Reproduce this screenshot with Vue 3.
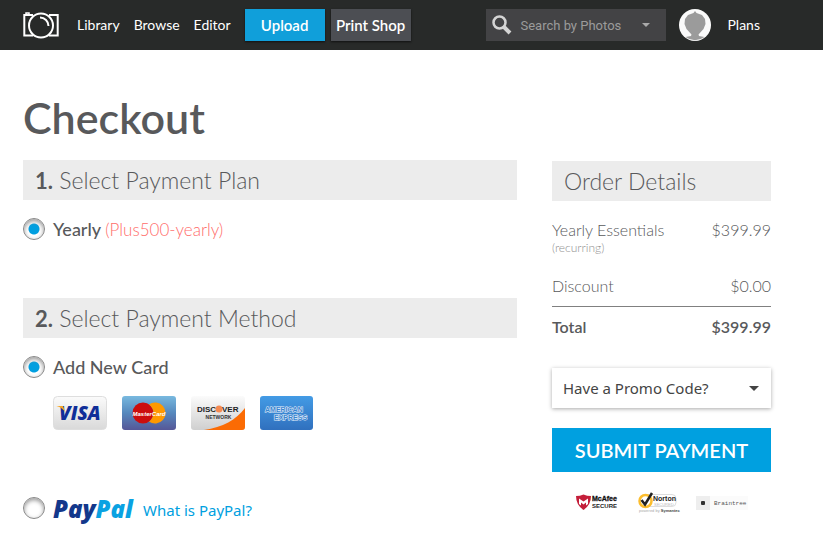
<script setup>
import { ref } from 'vue'

const query = ref('')
const plan = ref('yearly')
const method = ref('card')
const promoOpen = ref(false)
const links = ['Library', 'Browse', 'Editor']
</script>

<template>
  <header class="topbar">
    <a class="brand" href="#" aria-label="Home">
      <svg width="36" height="27" viewBox="0 0 36 27" fill="none" stroke="#fff">
        <path d="M10 3H1.3v20.500H10M26 3h8.700v20.500H26" stroke-width="2" />
        <path d="M3 2.500V1h3v1.500" stroke-width="1.500" />
        <circle cx="18" cy="13.500" r="12" stroke-width="2" />
        <path d="M17 5.500a8.500 8.500 0 0 1 8.500 8.500" stroke-width="2" />
      </svg>
    </a>
    <nav class="nav">
      <a v-for="link in links" :key="link" href="#">{{ link }}</a>
    </nav>
    <div class="actions">
      <button type="button" class="upload">Upload</button>
      <button type="button" class="shop">Print Shop</button>
    </div>
    <form class="search" role="search" @submit.prevent>
      <svg width="20" height="20" viewBox="0 0 20 20" fill="none" stroke="#d4d4d4">
        <circle cx="7.500" cy="7.500" r="6" stroke-width="2.500" />
        <path d="M12 12l6 6" stroke-width="4" />
      </svg>
      <input v-model="query" type="text" aria-label="Search" placeholder="Search by Photos" />
      <button type="button" aria-label="Search type">
        <svg width="8" height="4" viewBox="0 0 8 4"><path d="M0 0h8L4 4z" fill="#aaa" /></svg>
      </button>
    </form>
    <a class="avatar" href="#" aria-label="Account">
      <svg width="32" height="32" viewBox="0 0 32 32">
        <circle cx="16" cy="16" r="16" fill="#fafafa" />
        <path d="M16 2l1.500 2L23 6l3 4 .5 5-2 5-5 5.500.5 1.500 5.500 1A16 16 0 0 1 6.500 28l5.500-1 .5-1.500-5-5.500-2-5L6 10l3-4 5.500-2z" fill="#9b9b9b" />
      </svg>
    </a>
    <a class="plans" href="#">Plans</a>
  </header>

  <main class="page">
    <h1>Checkout</h1>
    <div class="columns">
      <div>
        <section class="plan">
          <h2><b>1.</b> Select Payment Plan</h2>
          <label class="choice">
            <input v-model="plan" type="radio" name="plan" value="yearly" />
            <span>Yearly <span class="code">(Plus500-yearly)</span></span>
          </label>
        </section>

        <section>
          <h2><b>2.</b> Select Payment Method</h2>
          <label class="choice">
            <input v-model="method" type="radio" name="method" value="card" />
            <span>Add New Card</span>
          </label>
          <div class="cards">
            <svg width="54" height="34" viewBox="0 0 54 34" role="img" aria-label="Visa">
              <defs>
                <linearGradient id="silver" x2="0" y2="1"><stop stop-color="#fbfbfb" /><stop offset="1" stop-color="#d9d9d9" /></linearGradient>
              </defs>
              <rect x=".5" y=".5" width="53" height="33" rx="4" fill="url(#silver)" stroke="#dedede" />
              <text x="6" y="24" class="visa">VISA</text>
              <path d="M3.500 10h6.500l2.500 6.500q-3-5-9-6.500z" fill="#f5a623" />
            </svg>
            <svg width="54" height="34" viewBox="0 0 54 34" role="img" aria-label="MasterCard">
              <defs>
                <linearGradient id="dusk" x2="0" y2="1"><stop stop-color="#78b9df" /><stop offset=".5" stop-color="#5688bd" /><stop offset="1" stop-color="#565797" /></linearGradient>
              </defs>
              <rect width="54" height="34" rx="3" fill="url(#dusk)" />
              <circle cx="21" cy="17" r="10.500" fill="#cc0d0d" />
              <path d="M27 8.400a10.500 10.500 0 1 1 0 17.200a10.500 10.500 0 0 0 0-17.200z" fill="#ff9900" />
              <text x="27" y="19.500" text-anchor="middle" class="master">MasterCard</text>
            </svg>
            <svg width="54" height="34" viewBox="0 0 54 34" role="img" aria-label="Discover">
              <defs>
                <linearGradient id="pewter" x2="0" y2="1"><stop stop-color="#fbfbfb" /><stop offset="1" stop-color="#cfcfcf" /></linearGradient>
              </defs>
              <rect width="54" height="34" rx="3" fill="url(#pewter)" />
              <path d="M13 34C32 31 45 24 54 12v19q0 3-3 3z" fill="#fb6b04" />
              <text x="6" y="16" class="discover">DISC</text>
              <circle cx="28" cy="13" r="3.500" fill="#f58a52" />
              <text x="31" y="16" class="discover">VER</text>
              <text x="27.500" y="23" text-anchor="middle" class="network">NETWORK</text>
            </svg>
            <svg width="53" height="34" viewBox="0 0 53 34" role="img" aria-label="American Express">
              <defs>
                <linearGradient id="sky" x2="0" y2="1"><stop stop-color="#439be5" /><stop offset="1" stop-color="#3070be" /></linearGradient>
              </defs>
              <rect width="53" height="34" rx="3" fill="url(#sky)" />
              <text x="5" y="16" class="amex">AMERICAN</text>
              <text x="14" y="24" class="amex">EXPRESS</text>
            </svg>
          </div>
          <div class="paypal">
            <label class="choice">
              <input v-model="method" type="radio" name="method" value="paypal" />
              <svg width="81" height="30" viewBox="0 0 81 30" role="img" aria-label="PayPal">
                <text x="0" y="21" class="pp"><tspan fill="#13388b">Pay</tspan><tspan fill="#0aa2e2">Pal</tspan></text>
              </svg>
            </label>
            <a href="#">What is PayPal?</a>
          </div>
        </section>
      </div>

      <aside>
        <h2>Order Details</h2>
        <table>
          <tbody>
            <tr class="item">
              <th scope="row">Yearly Essentials<small>(recurring)</small></th>
              <td>$399.99</td>
            </tr>
            <tr class="discount">
              <th scope="row">Discount</th>
              <td>$0.00</td>
            </tr>
            <tr class="total">
              <th scope="row">Total</th>
              <td>$399.99</td>
            </tr>
          </tbody>
        </table>
        <button type="button" class="promo" :aria-expanded="promoOpen" @click="promoOpen = !promoOpen">
          <span>Have a Promo Code?</span>
          <svg width="10" height="5" viewBox="0 0 10 5"><path d="M0 0h10L5 5z" fill="#444" /></svg>
        </button>
        <button type="button" class="submit">SUBMIT PAYMENT</button>
        <div class="seals">
          <svg width="46" height="22" viewBox="0 0 46 22" role="img" aria-label="McAfee Secure">
            <path d="M0 4q4 0 7.500-1.500Q11 4 15 4q0 9-7.500 14Q0 13 0 4z" fill="#c41e3a" />
            <path d="M3 12V6.500l4.500 3 4.500-3V12l-2 1.500v-3l-2.500 2-2.500-2v3z" fill="#fff" />
            <text x="16" y="9" class="mc">McAfee</text>
            <text x="16" y="16" class="sec">SECURE</text>
          </svg>
          <svg width="42" height="22" viewBox="0 0 42 22" role="img" aria-label="Norton Secured">
            <rect x="7" y="2.500" width="31" height="12" rx="4" fill="#fff" stroke="#ddd" />
            <circle cx="7.500" cy="9" r="6" fill="#fff" stroke="#fcbd2d" stroke-width="2.500" />
            <path d="M3.500 8l3.500 4.500L14 1" fill="none" stroke="#222" stroke-width="2.500" />
            <text x="15" y="9" class="norton">Norton</text>
            <text x="16" y="14" class="tiny faint">SECURED</text>
            <text x="1" y="20" class="tiny"><tspan fill="#aaa">powered by</tspan> <tspan font-weight="700">Symantec</tspan></text>
          </svg>
          <svg width="52" height="22" viewBox="0 0 52 22" role="img" aria-label="Braintree">
            <rect y="4" width="52" height="14" fill="#fbfbfb" />
            <rect y="4" width="14" height="14" fill="#eee" />
            <rect x="5" y="9" width="4" height="4" rx="1" fill="#333" />
            <text x="18" y="13" class="brain">Braintree</text>
          </svg>
        </div>
      </aside>
    </div>
  </main>
</template>

<style>
body {
  margin: 0;
  background: #fff;
}
</style>

<style scoped>
.topbar,
.page {
  font-family: Lato, "Open Sans", sans-serif;
  color: #58595b;
}
button,
input {
  font-family: inherit;
  margin: 0;
  padding: 0;
  border: 0;
}
button {
  cursor: pointer;
}
a {
  color: #00a0e0;
  text-decoration: none;
}
svg {
  display: block;
  flex: none;
  overflow: visible;
}

.topbar {
  display: flex;
  align-items: center;
  height: 50px;
  padding: 0 23px;
  box-sizing: border-box;
  background: #282a29;
}
.nav {
  display: flex;
  gap: 14px;
  margin-left: 18px;
}
.nav a,
.plans {
  font-size: 14px;
  line-height: 20px;
  color: #fff;
}
.actions {
  display: flex;
  gap: 6px;
  margin-left: 14px;
}
.actions button {
  width: 80px;
  height: 32px;
  color: #fff;
  font-size: 15px;
  font-weight: 600;
  box-shadow: 0 1px 2px #111;
}
.actions .upload {
  background: #109fda;
}
.actions .shop {
  background: #4c4e53;
}
.search {
  display: flex;
  align-items: center;
  width: 180px;
  height: 32px;
  margin-left: auto;
  padding: 0 16px 0 6px;
  gap: 8px;
  box-sizing: border-box;
  background: #434345;
}
.search input {
  flex: 1;
  min-width: 0;
  height: 30px;
  background: none;
  color: #ddd;
  font: 13px Roboto, sans-serif;
}
.search input::placeholder {
  color: #9b9b9b;
  opacity: 1;
}
.search button {
  background: none;
}
.avatar {
  margin-left: 13px;
}
.plans {
  margin: 0 40px 0 16px;
}

.page {
  padding: 44px 52px 24px 23px;
}
h1 {
  margin: 0 0 18px;
  font-size: 43px;
  line-height: 48px;
  font-weight: 600;
}
.columns {
  display: grid;
  grid-template-columns: minmax(0, 1fr) 219px;
  gap: 35px;
}
h2 {
  margin: 0;
  padding: 0 12px;
  background: #ececec;
  font-size: 23px;
  line-height: 40px;
  height: 40px;
  font-weight: 300;
}
h2 b {
  font-size: 22px;
  font-weight: 700;
}
.choice {
  display: flex;
  align-items: center;
  gap: 8px;
  font-size: 18px;
  line-height: 22px;
  font-weight: 500;
}
h2 + .choice {
  margin-top: 18px;
}
.choice input {
  appearance: none;
  flex: none;
  width: 22px;
  height: 22px;
  border: 1px solid #888;
  border-radius: 50%;
  background: #fff;
  box-shadow: inset 0 2px 4px #999;
}
.choice input:checked {
  background: radial-gradient(circle, #009fe0 5px, #fff 6px);
}
.code {
  color: #ff6d6a;
  font-size: 17px;
  line-height: 1;
  font-weight: 300;
}
.plan {
  margin-bottom: 58px;
}
.cards {
  display: flex;
  gap: 15px;
  margin: 18px 0 67px 30px;
}
.paypal {
  display: flex;
  align-items: flex-start;
  gap: 9px;
  font: 15px/27px "Noto Sans", sans-serif;
}
.paypal .choice {
  align-items: flex-start;
}

aside {
  padding-top: 1px;
}
table {
  width: 100%;
  margin-top: 19px;
  border-collapse: collapse;
  font-size: 16px;
  line-height: 20px;
}
th,
td {
  padding: 0;
  text-align: left;
  vertical-align: top;
  font-weight: 300;
}
td {
  text-align: right;
}
small {
  display: block;
  font-size: 12px;
  line-height: 16px;
  color: #909090;
}
.item > * {
  padding-bottom: 20px;
}
.discount > * {
  padding-bottom: 10px;
  border-bottom: 1px solid #808080;
}
.total > * {
  padding-top: 10px;
  font-weight: 600;
}
.promo {
  display: flex;
  align-items: center;
  justify-content: space-between;
  width: 100%;
  height: 40px;
  margin-top: 31px;
  padding: 0 12px 0 11px;
  background: #fff;
  box-shadow: 0 1px 4px #aaa;
  color: #444;
  font: 15px "Noto Sans", sans-serif;
}
.submit {
  width: 100%;
  height: 44px;
  margin-top: 20px;
  background: #00a0e0;
  color: #fff;
  font-size: 20px;
  font-weight: 600;
}
.seals {
  display: flex;
  justify-content: center;
  gap: 16px;
  margin-top: 20px;
}

.visa {
  font: italic 800 19px "Open Sans", sans-serif;
  fill: #102e98;
}
.master {
  font: italic 700 6px "Liberation Sans", sans-serif;
  fill: #fff;
}
.discover {
  font: 700 8px "Liberation Sans", sans-serif;
  fill: #222;
}
.network {
  font: 700 5px "Liberation Sans", sans-serif;
  fill: #333;
}
.amex {
  font: 700 7px "Liberation Sans", sans-serif;
  fill: #3b85d0;
  stroke: #e6f1fb;
  stroke-width: 1px;
  paint-order: stroke;
}
.pp {
  font: italic 800 24px "Open Sans", sans-serif;
}
.mc {
  font: 700 7px "Liberation Sans", sans-serif;
  fill: #111;
  stroke: #111;
  stroke-width: .3px;
}
.sec {
  font: 700 6px "Liberation Sans", sans-serif;
  fill: #222;
}
.norton {
  font: 700 7px "Liberation Sans", sans-serif;
  fill: #222;
}
.tiny {
  font: 4px "Liberation Sans", sans-serif;
  fill: #444;
}
.faint {
  fill: #bbb;
}
.brain {
  font: 6px "Liberation Mono", monospace;
  fill: #555;
}
</style>
